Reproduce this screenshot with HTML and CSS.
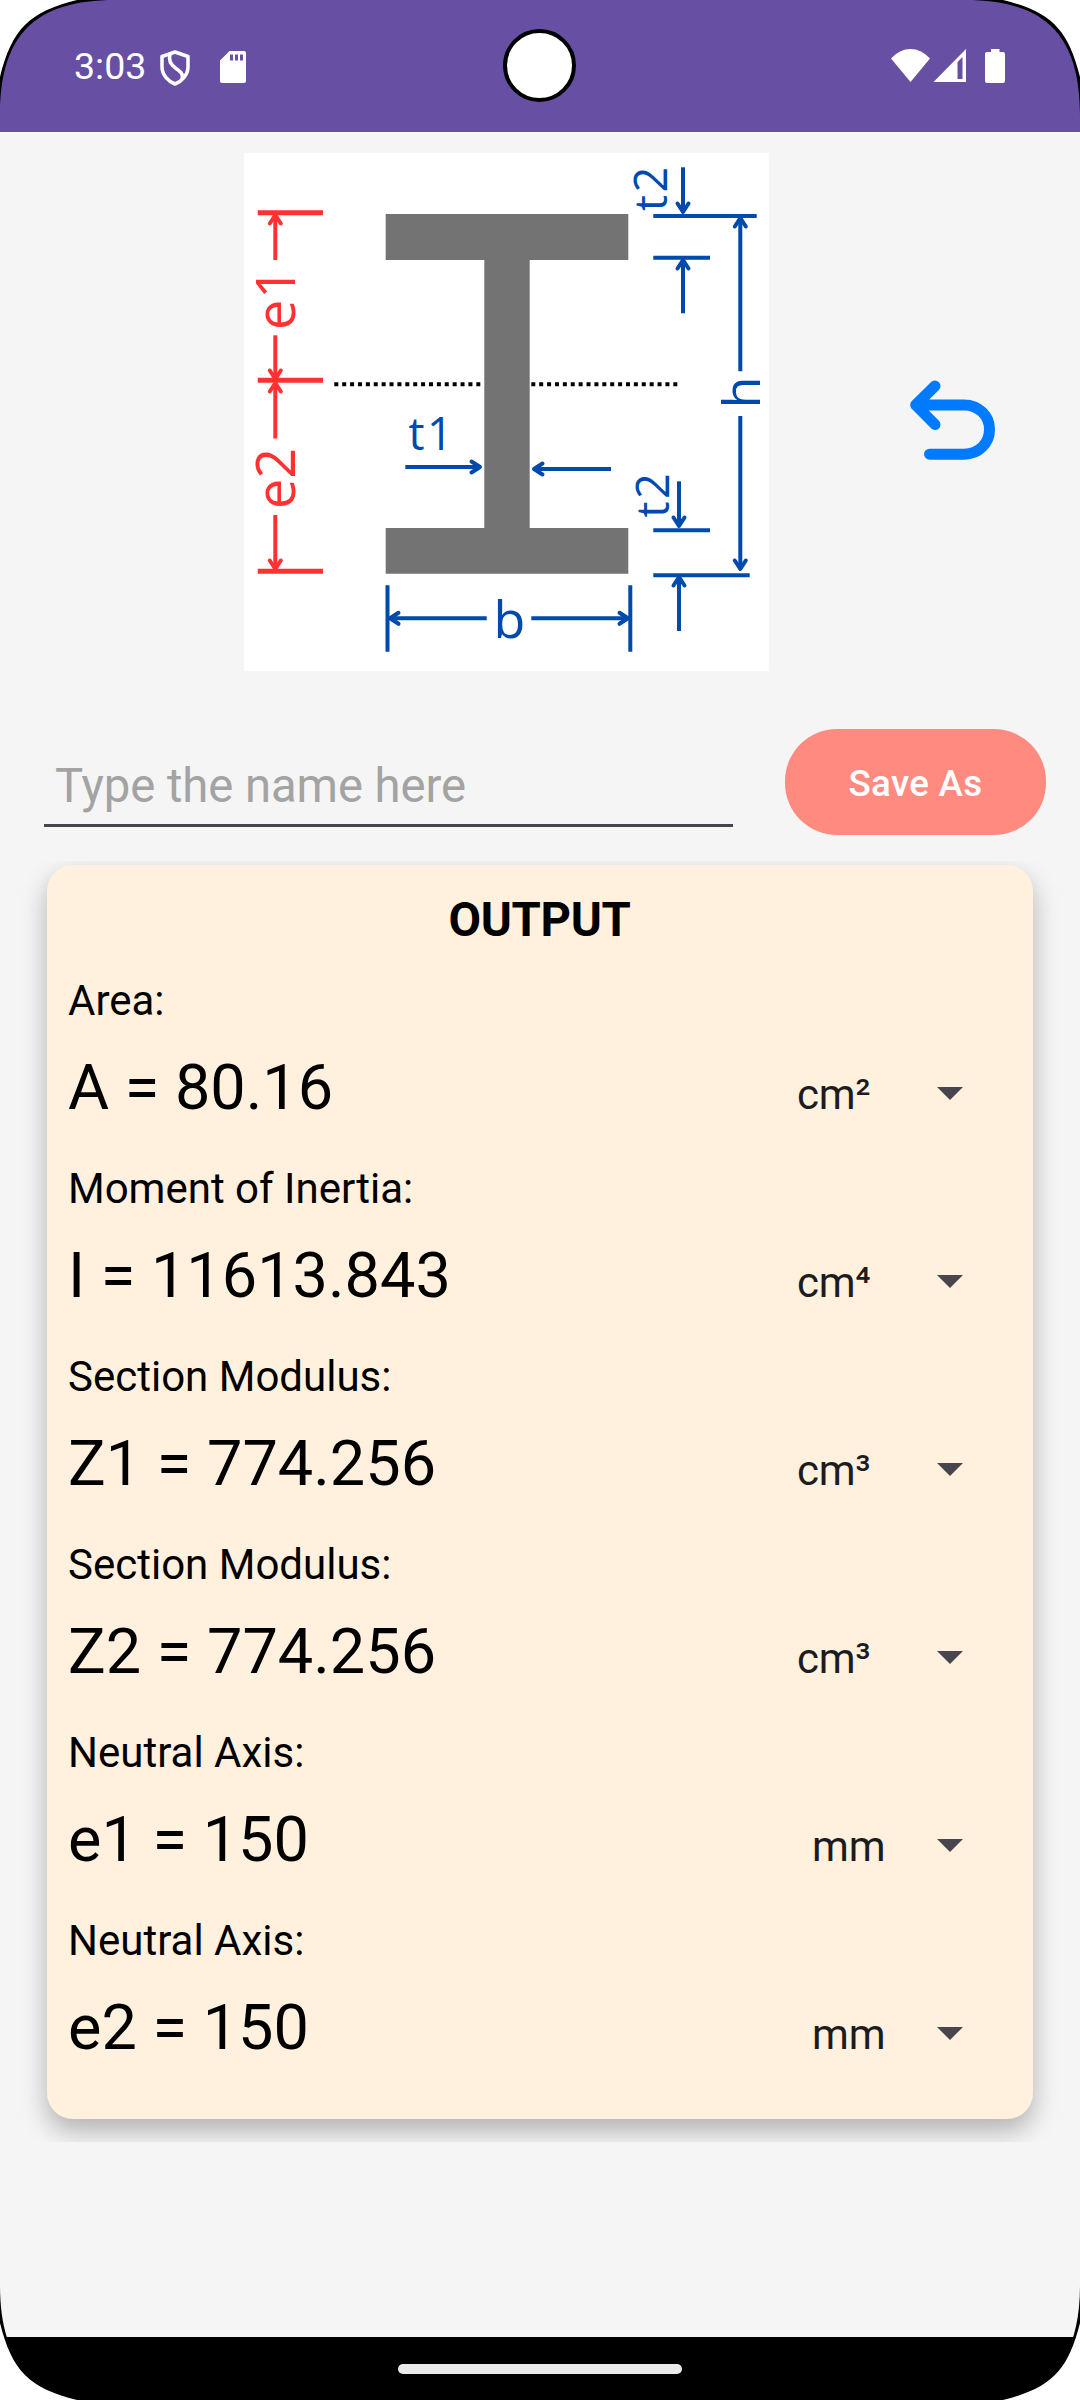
FILE: index.html
```
<!DOCTYPE html>
<html lang="en">
    <head>
        <title>I Section</title>
        <meta charset="utf-8">
        <link rel="stylesheet" href="styles.css">
    </head>
    <body>
        <header class="status">
            <span class="clock">3:03</span>
            <svg class="shield" width="30" height="36" viewBox="0 0 30 36">
                <path d="M15 2 L28 6.500 V17 C28 25 21.500 31.500 15 34 C8.500 31.500 2 25 2 17 V6.500 Z"/>
                <path d="M10 4.500 C8 11 11 15 16 18.500 C21 22 23.500 24 22 29"/>
            </svg>
            <svg class="sdcard" width="26" height="32" viewBox="0 0 26 32">
                <path fill="#fff" fill-rule="evenodd" d="M9.500 0 H24 Q26 0 26 2 V30 Q26 32 24 32 H2 Q0 32 0 30 V9.500 Z M10 3.500 V9.500 H13 V3.500 Z M15 3.500 V9.500 H18 V3.500 Z M20 3.500 V9.500 H23 V3.500 Z"/>
            </svg>
            <svg class="signals" width="114" height="34" viewBox="0 0 114 34">
                <path d="M0 9.500 Q8.500 0 19.500 0 Q30.500 0 39 9.500 L19.500 33 Z"/>
                <path fill-rule="evenodd" d="M42.500 33 L75 0 V33 Z M66.500 13 V30 H71.500 V8 Z"/>
                <path d="M100 0 H108.500 V3 H112 Q114 3 114 5 V32 Q114 34 112 34 H96 Q94 34 94 32 V5 Q94 3 96 3 H100 Z"/>
            </svg>
            <div class="camera"></div>
        </header>
        <main>
            <section class="top">
                <svg class="diagram" width="525" height="518" viewBox="0 0 525 518">
                    <defs>
                        <marker id="redhead" markerUnits="userSpaceOnUse" markerWidth="20" markerHeight="20" refX="13" refY="10" orient="auto">
                            <path class="red thin" d="M4.500 4.500 L13 10 L4.500 15.500"/>
                        </marker>
                        <marker id="bluehead" markerUnits="userSpaceOnUse" markerWidth="20" markerHeight="20" refX="13" refY="10" orient="auto">
                            <path class="blue" d="M4.500 4.500 L13 10 L4.500 15.500"/>
                        </marker>
                    </defs>
                    <rect width="525" height="518" fill="#fff"/>
                    <!-- beam -->
                    <path fill="#737373" d="M141.700 61 H384.300 V107 H285.700 V375 H384.300 V420.700 H141.700 V375 H240.300 V107 H141.700 Z"/>
                    <path class="axis" d="M90.300 231.300 H237 M287.300 231.300 H434"/>
                    <!-- e1, e2 -->
                    <path class="red" d="M13.700 59.800 H79 M13.700 227.200 H79 M13.700 418.200 H79"/>
                    <g class="red thin arrow-red">
                        <path d="M31.300 107 V62"/>
                        <path d="M31.300 182.300 V226"/>
                        <path d="M31.300 285.500 V230"/>
                        <path d="M31.300 362 V416"/>
                    </g>
                    <text class="redtext" transform="translate(51 177) rotate(-90)" letter-spacing="1">e1</text>
                    <text class="redtext" transform="translate(51 356) rotate(-90)">e2</text>
                    <!-- t2, h, t1, b -->
                    <path class="blue" d="M409.300 63 H512.700 M409.300 104.700 H466 M409.300 377.300 H466 M409.300 422.200 H505.700 M143.500 432.300 V498.700 M386.300 432.300 V498.700"/>
                    <g class="blue arrow-blue">
                        <path d="M439 14.300 V59"/>
                        <path d="M439 160.300 V107"/>
                        <path d="M496.300 218.300 V65"/>
                        <path d="M496.300 263 V416"/>
                        <path d="M435 328.300 V373"/>
                        <path d="M435 478 V424"/>
                        <path d="M161.300 314 H236"/>
                        <path d="M367 316 H290"/>
                        <path d="M242.700 465.300 H146"/>
                        <path d="M287.300 465.300 H384"/>
                    </g>
                    <text class="bluetext small" transform="translate(422.500 58) rotate(-90)">t2</text>
                    <text class="bluetext small" transform="translate(425.300 364.500) rotate(-90)">t2</text>
                    <text class="bluetext small" x="164.500" y="296.500">t1</text>
                    <text class="bluetext" transform="translate(516 255.500) rotate(-90)">h</text>
                    <text class="bluetext" x="249.500" y="485">b</text>
                </svg>
                <svg class="back" width="86" height="80" viewBox="0 0 86 80">
                    <path d="M25 6 L5.700 25 L25 44.500 M5.700 25 H54 C69 25 79.500 36 79.500 49.500 C79.500 63 69 74.200 54 74.200 H19.500"/>
                </svg>
            </section>
            <form class="save">
                <input type="text" class="name" placeholder="Type the name here">
                <button type="button" class="button">Save As</button>
            </form>
            <div class="cardwrap">
                <section class="card">
                    <h1>OUTPUT</h1>
                    <div class="entry">
                        <div class="label">Area:</div>
                        <div class="value">A = 80.16</div>
                        <div class="unit">cm²</div>
                    </div>
                    <div class="entry">
                        <div class="label">Moment of Inertia:</div>
                        <div class="value">I = 11613.843</div>
                        <div class="unit">cm⁴</div>
                    </div>
                    <div class="entry">
                        <div class="label">Section Modulus:</div>
                        <div class="value">Z1 = 774.256</div>
                        <div class="unit">cm³</div>
                    </div>
                    <div class="entry">
                        <div class="label">Section Modulus:</div>
                        <div class="value">Z2 = 774.256</div>
                        <div class="unit">cm³</div>
                    </div>
                    <div class="entry">
                        <div class="label">Neutral Axis:</div>
                        <div class="value">e1 = 150</div>
                        <div class="unit mm">mm</div>
                    </div>
                    <div class="entry">
                        <div class="label">Neutral Axis:</div>
                        <div class="value">e2 = 150</div>
                        <div class="unit mm">mm</div>
                    </div>
                </section>
            </div>
        </main>
        <footer><div class="pill"></div></footer>
        <svg width="0" height="0" class="corner">
            <defs>
                <g id="corner">
                    <path fill="#000" d="M0 0 V115 C0 35 35 0 115 0 Z"/>
                    <path fill="#fff" d="M0 0 V77 C12 29 29 12 77 0 Z"/>
                </g>
            </defs>
        </svg>
        <svg class="corner tl" width="115" height="115"><use href="#corner"/></svg>
        <svg class="corner tr" width="115" height="115"><use href="#corner"/></svg>
        <svg class="corner bl" width="115" height="115"><use href="#corner"/></svg>
        <svg class="corner br" width="115" height="115"><use href="#corner"/></svg>
    </body>
</html>
```
FILE: styles.css
```
*{
    box-sizing: border-box;
}
body{
    position: relative;
    display: flex;
    flex-direction: column;
    width: 1080px;
    height: 2400px;
    margin: 0;
    overflow: hidden;
    background-color: #f5f5f5;
    font-family: Roboto, sans-serif;
    color: black;
}
svg{
    display: block;
    flex: none;
}
.status{
    position: relative;
    display: flex;
    align-items: flex-start;
    height: 132px;
    padding: 48px 75px 0 74px;
    background-color: #6750a4;
    color: white;
}
.clock{
    width: 86px;
    font-size: 37.5px;
    line-height: 36px;
}
.shield{
    margin-top: 2px;
    fill: none;
    stroke: white;
    stroke-width: 3.5px;
    stroke-linejoin: round;
}
.sdcard{
    margin: 3px 0 0 30px;
}
.signals{
    margin: 1px 0 0 auto;
    fill: white;
}
.camera{
    position: absolute;
    left: 503px;
    top: 29px;
    width: 73px;
    height: 73px;
    border: solid black 4px;
    border-radius: 50%;
    background-color: white;
}
main{
    flex: 1;
}
.top{
    display: flex;
    padding: 21px 0 0 244px;
}
.diagram text{
    overflow: visible;
}
.back{
    margin: 227px 0 0 141px;
    fill: none;
    stroke: #007aff;
    stroke-width: 11px;
    stroke-linecap: round;
    stroke-linejoin: round;
}
.red{
    fill: none;
    stroke: #ff3131;
    stroke-width: 5px;
}
.thin{
    stroke-width: 4px;
}
.blue{
    fill: none;
    stroke: #004aad;
    stroke-width: 4px;
}
marker path{
    stroke-linecap: round;
    stroke-linejoin: round;
}
.arrow-red path{
    marker-end: url(#redhead);
}
.arrow-blue path{
    marker-end: url(#bluehead);
}
.axis{
    fill: none;
    stroke: black;
    stroke-width: 4px;
    stroke-dasharray: 4 3.89;
}
.redtext, .bluetext{
    font-family: "Open Sans", sans-serif;
    font-size: 52px;
    fill: #004aad;
}
.redtext{
    font-size: 54px;
    fill: #ff3131;
}
.small{
    font-size: 45px;
    letter-spacing: 2.5px;
}
.save{
    display: flex;
    margin-top: 58px;
    padding: 0 34px 0 44px;
    justify-content: space-between;
}
.name{
    width: 689px;
    height: 98px;
    padding: 18px 12px 0 11px;
    border: none;
    border-bottom: solid #49454f 3px;
    background: none;
    font: 47.25px Roboto, sans-serif;
    letter-spacing: -.06px;
}
.name::placeholder{
    color: #a3a3a3;
}
.button{
    width: 261px;
    height: 106px;
    padding-top: 3px;
    border: none;
    border-radius: 52px;
    background-color: #ff8a80;
    color: white;
    font: 500 36.75px Roboto, sans-serif;
    letter-spacing: .3px;
}
/* cuts the shadow just above and below the card */
.cardwrap{
    margin-top: 26px;
    padding: 4px 47px 23px;
    overflow: hidden;
}
.card{
    height: 1254px;
    padding: 27px 22px 0 21px;
    border-radius: 26px;
    background-color: #fff1de;
    box-shadow: 0 12px 26px rgba(0,0,0,.28);
}
h1{
    height: 84px;
    margin: 0;
    font-size: 47.25px;
    line-height: 56px;
    text-align: center;
    letter-spacing: -.3px;
}
.entry{
    display: grid;
    grid-template-columns: 729px 1fr;
    grid-template-rows: 74px 114px;
}
.label{
    grid-column: 1 / 3;
    font-size: 42px;
    line-height: 50px;
}
.value{
    margin-top: 1px;
    font-size: 63px;
    line-height: 74px;
}
.unit{
    display: flex;
    height: 50px;
    margin-top: 20px;
    justify-content: space-between;
    align-items: flex-start;
    padding-right: 48px;
    font-size: 42px;
    line-height: 50px;
    letter-spacing: -.3px;
    color: #1c1b1f;
}
.mm{
    padding-left: 15px;
    letter-spacing: 0;
}
.unit::after{
    content: "";
    margin-top: 17px;
    border: solid transparent 13px;
    border-top-color: #49454f;
    border-bottom: none;
}
footer{
    height: 63px;
    padding-top: 27px;
    background-color: black;
}
.pill{
    width: 284px;
    height: 10px;
    margin: auto;
    border-radius: 5px;
    background-color: #ebebeb;
}
/* rounded screen corners */
.corner{
    position: absolute;
}
.tl{
    left: 0;
    top: 0;
}
.tr{
    right: 0;
    top: 0;
    transform: scaleX(-1);
}
.bl{
    left: 0;
    bottom: 0;
    transform: scaleY(-1);
}
.br{
    right: 0;
    bottom: 0;
    transform: scale(-1, -1);
}
```
